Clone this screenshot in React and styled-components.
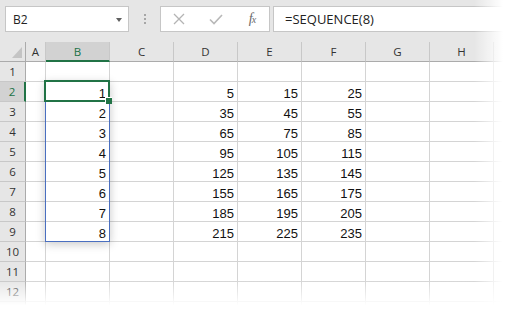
import React from 'react'
import styled, { createGlobalStyle, css } from 'styled-components'

const GlobalStyle = createGlobalStyle`
  html, body {
    margin: 0;
    padding: 0;
    background: #ffffff;
  }
  * {
    box-sizing: border-box;
  }
`

const Page = styled.div`
  position: relative;
  width: 510px;
  height: 314px;
  overflow: hidden;
  background: #ffffff;
  font-family: 'Open Sans', 'Liberation Sans', sans-serif;
`

const Toolbar = styled.div`
  display: flex;
  align-items: flex-start;
  height: 42px;
  padding: 6px 0 0 5px;
  background: #e6e6e6;
`

const NameBox = styled.div`
  display: flex;
  align-items: center;
  justify-content: space-between;
  width: 124px;
  height: 26px;
  padding: 0 6px 0 7px;
  background: #ffffff;
  border: 1px solid #c6c6c6;
  font-size: 12px;
  color: #222;
`

const DropArrow = styled.span`
  width: 0;
  height: 0;
  border-left: 3.5px solid transparent;
  border-right: 3.5px solid transparent;
  border-top: 4px solid #606060;
  margin-top: 1px;
`

const Grip = styled.div`
  display: flex;
  flex-direction: column;
  align-items: center;
  justify-content: center;
  gap: 2px;
  width: 31px;
  height: 26px;

  span {
    width: 2px;
    height: 2px;
    background: #a6a6a6;
  }
`

const IconBox = styled.div`
  display: flex;
  align-items: center;
  width: 110px;
  height: 26px;
  padding-left: 12px;
  background: #ffffff;
  border: 1px solid #c6c6c6;
`

const IconSlot = styled.div`
  display: flex;
  align-items: center;
  justify-content: center;
  width: ${(p) => p.w}px;
  margin-right: ${(p) => p.gap}px;
`

const Fx = styled.span`
  font-family: 'Liberation Serif', serif;
  font-style: italic;
  font-size: 14px;
  color: #6a6a6a;
  letter-spacing: -1px;

  small {
    font-size: 10px;
  }
`

const FormulaBox = styled.div`
  display: flex;
  align-items: center;
  flex: 1;
  height: 26px;
  margin-left: 3px;
  padding-left: 11px;
  background: #ffffff;
  border: 1px solid #c6c6c6;
  border-right: none;
  font-size: 13px;
  color: #222;
`

const SheetWrap = styled.div`
  position: relative;
`

const Sheet = styled.div`
  display: grid;
  grid-template-columns: 26px 20px repeat(8, 64px);
  grid-auto-rows: 20px;
  width: 558px;
`

const HeadCell = styled.div`
  display: flex;
  align-items: center;
  justify-content: center;
  background: ${(p) => (p.active ? '#d2d2d2' : '#e6e6e6')};
  color: ${(p) => (p.active ? '#217346' : '#333')};
  font-size: 11.5px;
  border-right: 1px solid #c8c8c8;
  border-bottom: 1px solid #ababab;
  ${(p) =>
    p.row &&
    css`
      border-right: 1px solid #ababab;
      border-bottom: 1px solid #c8c8c8;
    `}
  ${(p) =>
    p.active &&
    !p.row &&
    css`
      border-bottom: 2px solid #217346;
    `}
  ${(p) =>
    p.active &&
    p.row &&
    css`
      border-right: 2px solid #217346;
    `}
`

const Corner = styled(HeadCell)`
  position: relative;
  border-right: 1px solid #ababab;

  &::after {
    content: '';
    position: absolute;
    right: 3px;
    bottom: 3px;
    width: 0;
    height: 0;
    border-left: 10px solid transparent;
    border-bottom: 11px solid #c4c4c4;
  }
`

const Cell = styled.div`
  display: flex;
  align-items: flex-end;
  justify-content: flex-end;
  padding: 0 3px 0 0;
  border-right: 1px solid #d4d4d4;
  border-bottom: 1px solid #d4d4d4;
  font-family: 'Liberation Sans', Arial, sans-serif;
  font-size: 13px;
  line-height: 15px;
  color: #111;
`

const Spill = styled.div`
  position: absolute;
  left: 45px;
  top: 39px;
  width: 65px;
  height: 161px;
  border: 1px solid #4a6fc0;
  box-shadow: 0 2px 9px rgba(0, 0, 0, 0.22);
  pointer-events: none;
`

const ActiveCell = styled.div`
  position: absolute;
  left: 44px;
  top: 38px;
  width: 66px;
  height: 22px;
  border: 2px solid #217346;
  pointer-events: none;
`

const FillHandle = styled.div`
  position: absolute;
  right: -4px;
  bottom: -4px;
  width: 7px;
  height: 7px;
  background: #217346;
  border-left: 1px solid #ffffff;
  border-top: 1px solid #ffffff;
`

const RightFade = styled.div`
  position: absolute;
  top: 0;
  right: 0;
  width: 36px;
  height: 100%;
  background: linear-gradient(to right, rgba(255, 255, 255, 0), #ffffff 80%);
  pointer-events: none;
`

const BottomFade = styled.div`
  position: absolute;
  left: 0;
  bottom: 0;
  width: 100%;
  height: 34px;
  background: linear-gradient(to bottom, rgba(255, 255, 255, 0), #ffffff 75%);
  pointer-events: none;
`

// the ninth column only shows as a faded strip at the right edge
const columns = ['A', 'B', 'C', 'D', 'E', 'F', 'G', 'H', '']
const rowCount = 12

const valueAt = (row, col) => {
  if (row < 2 || row > 9) return ''
  const i = row - 2
  if (col === 'B') return i + 1
  if (col === 'D') return 5 + i * 30
  if (col === 'E') return 15 + i * 30
  if (col === 'F') return 25 + i * 30
  return ''
}

const App = () => {
  const rows = []
  for (let r = 1; r <= rowCount + 1; r++) {
    rows.push(
      <React.Fragment key={r}>
        <HeadCell row active={r === 2}>
          {r <= rowCount ? r : ''}
        </HeadCell>
        {columns.map((c, i) => (
          <Cell key={i}>{valueAt(r, c)}</Cell>
        ))}
      </React.Fragment>
    )
  }

  return (
    <Page>
      <GlobalStyle />
      <Toolbar>
        <NameBox>
          B2
          <DropArrow />
        </NameBox>
        <Grip>
          <span />
          <span />
          <span />
        </Grip>
        <IconBox>
          <IconSlot w={12} gap={24}>
            <svg width="12" height="12" viewBox="0 0 12 12">
              <path d="M1 1 L11 11 M11 1 L1 11" stroke="#b4b4b4" strokeWidth="1.3" fill="none" />
            </svg>
          </IconSlot>
          <IconSlot w={14} gap={22}>
            <svg width="14" height="11" viewBox="0 0 14 11">
              <path d="M1 5.5 L5 9.5 L13 1" stroke="#b8b8b8" strokeWidth="1.6" fill="none" />
            </svg>
          </IconSlot>
          <IconSlot w={14} gap={0}>
            <Fx>
              f<small>x</small>
            </Fx>
          </IconSlot>
        </IconBox>
        <FormulaBox>=SEQUENCE(8)</FormulaBox>
      </Toolbar>
      <SheetWrap>
        <Sheet>
          <Corner />
          {columns.map((c, i) => (
            <HeadCell key={i} active={c === 'B'}>
              {c}
            </HeadCell>
          ))}
          {rows}
        </Sheet>
        <Spill />
        <ActiveCell>
          <FillHandle />
        </ActiveCell>
      </SheetWrap>
      <RightFade />
      <BottomFade />
    </Page>
  )
}

export default App
